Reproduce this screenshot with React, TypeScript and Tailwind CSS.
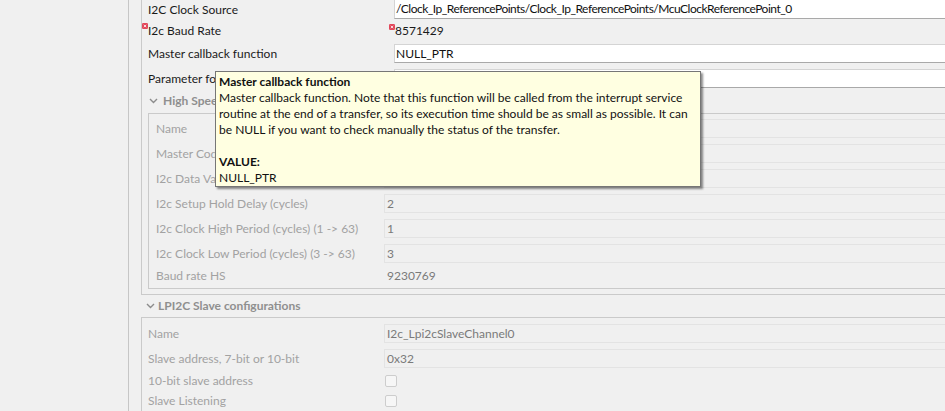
import React from "react";

function ErrIcon() {
  return (
    <svg width="6" height="6" viewBox="0 0 6 6" className="block">
      <rect x="0" y="0" width="6" height="6" rx="1.2" fill="#e2475a" />
      <path d="M1.8 1.8 L4.2 4.2 M4.2 1.8 L1.8 4.2" stroke="#ffffff" strokeWidth="0.8" />
    </svg>
  );
}

function Chevron() {
  return (
    <svg width="9" height="6" viewBox="0 0 9 6" className="block shrink-0">
      <path d="M1 1 L4.5 4.5 L8 1" fill="none" stroke="#8c8c8c" strokeWidth="1.4" />
    </svg>
  );
}

function Input({ value, className = "" }: { value: string; className?: string }) {
  return (
    <div
      className={
        "flex h-[19px] flex-1 items-center border border-[#d4d4d4] border-b-[#a9a9a9] bg-white pl-[1px] text-[#111] whitespace-nowrap " +
        className
      }
    >
      {value}
    </div>
  );
}

function DisField({ value }: { value: string }) {
  return (
    <div className="flex h-[19px] flex-1 items-center border border-[#e3e3e3] bg-[#f0f0f0] pl-[2px] text-[#7a7a7a] whitespace-nowrap">
      {value}
    </div>
  );
}

function DisRow({ label, value, lw }: { label: string; value: string; lw: string }) {
  return (
    <div className="flex h-[19px] items-center">
      <div className={"shrink-0 text-[#a2a2a2] whitespace-nowrap " + lw}>{label}</div>
      <DisField value={value} />
    </div>
  );
}

export default function App() {
  return (
    <div className="relative flex h-[411px] w-[945px] overflow-hidden bg-[#f0f0f0] font-['Lato','Open_Sans',sans-serif] text-[12px] leading-4">
      <div className="w-[129px] shrink-0 border-r border-[#c6c6c6]" />
      <div className="flex w-[830px] shrink-0 flex-col pl-[12px]">
        {/* top group */}
        <div className="flex flex-col border-b border-l border-[#cacaca] pb-[5px] pl-[6px]">
          <div className="flex h-[19px] items-center">
            <div className="w-[246px] shrink-0 text-[#1a1a1a]">I2C Clock Source</div>
            <Input
              value="/Clock_Ip_ReferencePoints/Clock_Ip_ReferencePoints/McuClockReferencePoint_0"
              className="-mt-px h-[20px] tracking-[-0.5px]"
            />
          </div>
          <div className="mt-[3px] flex h-[18px] items-center">
            <div className="relative w-[246px] shrink-0 text-[#1a1a1a]">
              <span className="absolute left-[-6px] top-[0px]">
                <ErrIcon />
              </span>
              I2c Baud Rate
            </div>
            <div className="relative pl-[1px] text-[#1a1a1a]">
              <span className="absolute left-[-5px] top-[1px]">
                <ErrIcon />
              </span>
              8571429
            </div>
          </div>
          <div className="mt-[4px] flex h-[19px] items-center">
            <div className="w-[246px] shrink-0 text-[#1a1a1a]">Master callback function</div>
            <Input value="NULL_PTR" />
          </div>
          <div className="mt-[6px] flex h-[19px] items-center">
            <div className="w-[246px] shrink-0 text-[#1a1a1a] whitespace-nowrap">Parameter for callback function</div>
            <Input value="NULL_PTR" />
          </div>
          <div className="mt-[4px] flex h-[18px] items-center gap-[5px] pl-[1px]">
            <Chevron />
            <span className="font-bold text-[#8f8f8f]">High Speed Mode Configuration</span>
          </div>
          <div className="mt-[3px] flex flex-col gap-[6px] border border-[#cacaca] pb-[3px] pl-[7px] pt-[5px]">
            <DisRow lw="w-[228px]" label="Name" value="I2c_Lpi2cHighSpeedMode" />
            <DisRow lw="w-[228px]" label="Master Code (0 -> 7)" value="0" />
            <DisRow lw="w-[228px]" label="I2c Data Valid Delay (cycles)" value="1" />
            <DisRow lw="w-[228px]" label="I2c Setup Hold Delay (cycles)" value="2" />
            <DisRow lw="w-[228px]" label="I2c Clock High Period (cycles) (1 -> 63)" value="1" />
            <DisRow lw="w-[228px]" label="I2c Clock Low Period (cycles) (3 -> 63)" value="3" />
            <div className="-mt-[3px] flex h-[19px] items-center">
              <div className="w-[231px] shrink-0 text-[#a2a2a2]">Baud rate HS</div>
              <div className="text-[#7a7a7a]">9230769</div>
            </div>
          </div>
        </div>
        {/* LPI2C Slave */}
        <div className="flex h-[23px] items-center gap-[3px] pl-[5px]">
          <Chevron />
          <span className="font-bold text-[#8f8f8f]">LPI2C Slave configurations</span>
        </div>
        <div className="flex flex-1 flex-col border-l border-t border-[#cacaca] pl-[6px] pt-[6px]">
          <div className="flex flex-col gap-[6px]">
            <DisRow lw="w-[236px]" label="Name" value="I2c_Lpi2cSlaveChannel0" />
            <DisRow lw="w-[236px]" label="Slave address, 7-bit or 10-bit" value="0x32" />
          </div>
          <div className="mt-[3px] flex h-[20px] items-center">
            <div className="w-[237px] shrink-0 text-[#a2a2a2]">10-bit slave address</div>
            <div className="h-[12px] w-[12px] rounded-[2px] border border-[#cdcdcd] bg-[#f6f6f6]" />
          </div>
          <div className="flex h-[20px] items-center">
            <div className="w-[237px] shrink-0 text-[#a2a2a2]">Slave Listening</div>
            <div className="h-[12px] w-[12px] rounded-[2px] border border-[#cdcdcd] bg-[#f6f6f6]" />
          </div>
        </div>
      </div>

      {/* tooltip */}
      <div className="absolute left-[215px] top-[71px] h-[116px] w-[486px] border border-[#767676] bg-[#ffffe1] px-[3px] pt-[2px] text-[#111] shadow-[2px_2px_2px_rgba(0,0,0,0.45)] whitespace-nowrap">
        <div className="font-bold">Master callback function</div>
        <div>Master callback function. Note that this function will be called from the interrupt service</div>
        <div>routine at the end of a transfer, so its execution time should be as small as possible. It can</div>
        <div>be NULL if you want to check manually the status of the transfer.</div>
        <div className="h-4" />
        <div className="font-bold">VALUE:</div>
        <div>NULL_PTR</div>
      </div>
    </div>
  );
}
